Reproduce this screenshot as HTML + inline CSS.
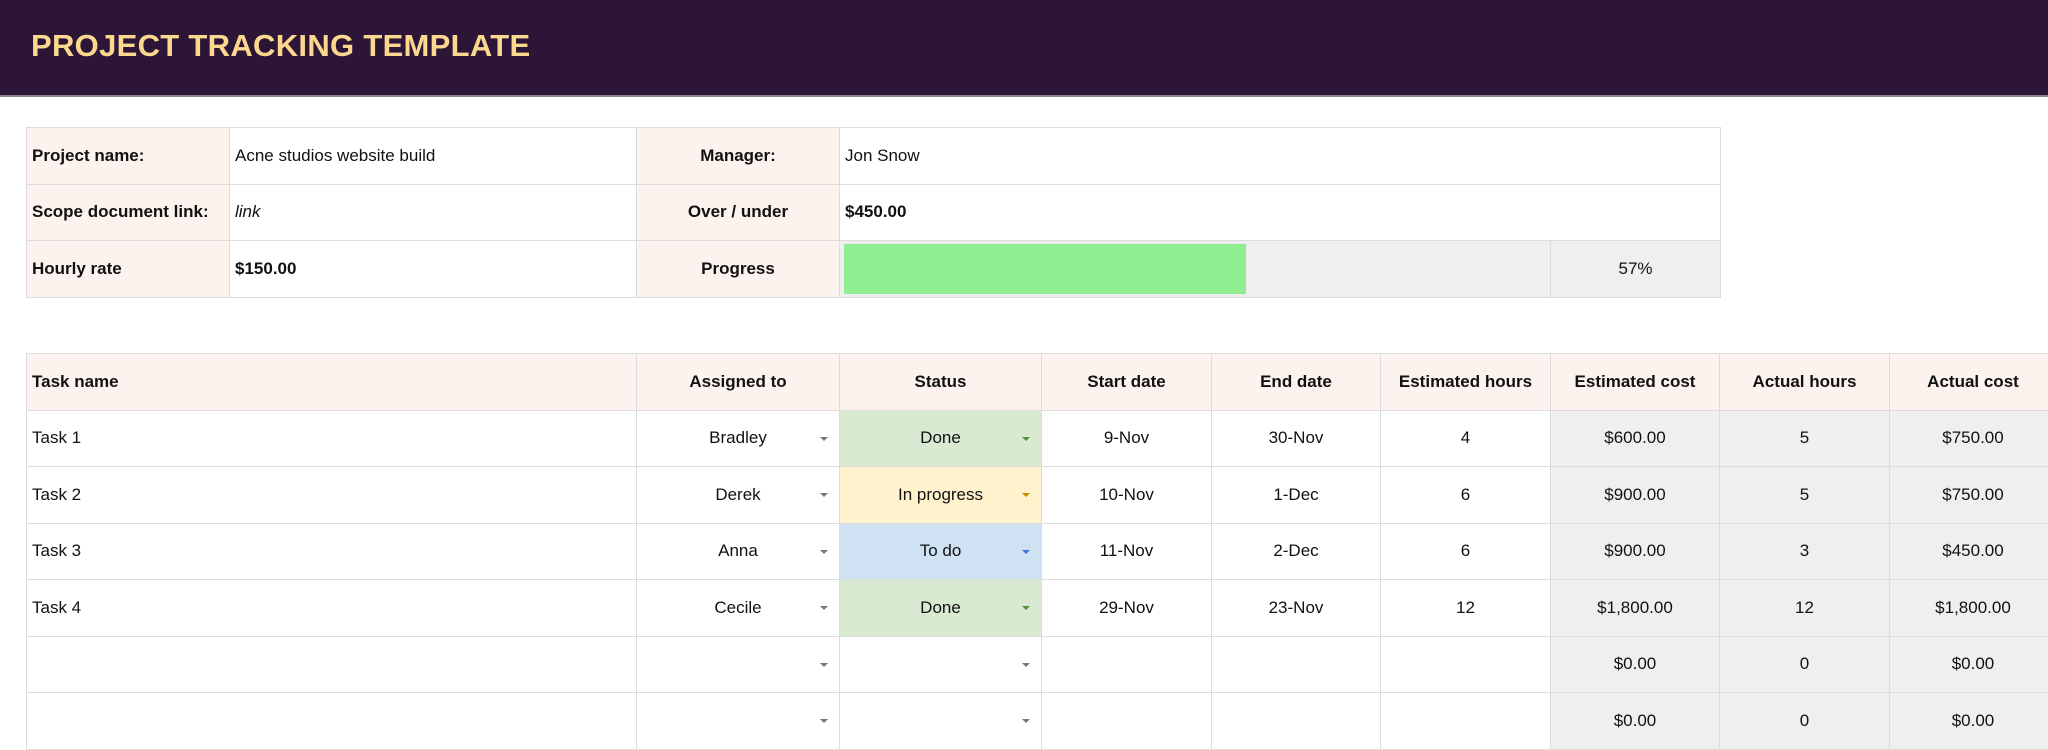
<!DOCTYPE html>
<html><head><meta charset="utf-8"><style>
*{margin:0;padding:0;box-sizing:border-box}
body{width:2048px;height:749px;overflow:hidden;background:#fff;font-family:"Liberation Sans",sans-serif;font-size:17px;color:#111;position:relative}
.hdr{position:absolute;left:0;top:0;width:2048px;height:97px;background:#2d1538;border-bottom:2px solid #8a8590}
.hdr h1{position:absolute;left:31px;top:28px;font-size:31px;font-weight:bold;color:#fcd88f;letter-spacing:0.3px}
table{position:absolute;border-collapse:collapse;table-layout:fixed}
td{border:1.5px solid #dcdcdc;height:56.5px;padding:0 5px;white-space:nowrap;overflow:hidden;position:relative}
.l{background:#fcf3ee;font-weight:bold}
.c{text-align:center}
.b{font-weight:bold}
.g{background:#efefef}
.dn{background:#d9ead3}.ip{background:#fff2cc}.td{background:#cfe2f3}
.ar::after{content:"";position:absolute;right:11px;top:26px;border-left:4px solid transparent;border-right:4px solid transparent;border-top:4px solid #777}
.ar.ag::after{border-top-color:#5a8f3c}.ar.ao::after{border-top-color:#c98a00}.ar.ab::after{border-top-color:#3c78d8}
</style></head><body>
<div class="hdr"><h1>PROJECT TRACKING TEMPLATE</h1></div>
<table style="left:26px;top:127px;width:1694px">
<colgroup><col style="width:203px"><col style="width:407px"><col style="width:203px"><col style="width:711px"><col style="width:170px"></colgroup>
<tr><td class="l">Project name:</td><td>Acne studios website build</td><td class="l c">Manager:</td><td colspan="2">Jon Snow</td></tr>
<tr><td class="l">Scope document link:</td><td><i>link</i></td><td class="l c">Over / under</td><td colspan="2" class="b">$450.00</td></tr>
<tr><td class="l">Hourly rate</td><td class="b">$150.00</td><td class="l c">Progress</td><td class="g" style="padding:3px 4px"><div style="width:402px;height:50px;background:#90ee90"></div></td><td class="g c">57%</td></tr>
</table>
<table style="left:26px;top:353px;width:2030px">
<colgroup><col style="width:610px"><col style="width:203px"><col style="width:202px"><col style="width:170px"><col style="width:169px"><col style="width:170px"><col style="width:169px"><col style="width:170px"><col style="width:167px"></colgroup>
<tr class="l"><td class="l">Task name</td><td class="l c">Assigned to</td><td class="l c">Status</td><td class="l c">Start date</td><td class="l c">End date</td><td class="l c">Estimated hours</td><td class="l c">Estimated cost</td><td class="l c">Actual hours</td><td class="l c">Actual cost</td></tr>
<tr><td>Task 1</td><td class="c ar">Bradley</td><td class="c dn ar ag">Done</td><td class="c">9-Nov</td><td class="c">30-Nov</td><td class="c">4</td><td class="c g">$600.00</td><td class="c g">5</td><td class="c g">$750.00</td></tr>
<tr><td>Task 2</td><td class="c ar">Derek</td><td class="c ip ar ao">In progress</td><td class="c">10-Nov</td><td class="c">1-Dec</td><td class="c">6</td><td class="c g">$900.00</td><td class="c g">5</td><td class="c g">$750.00</td></tr>
<tr><td>Task 3</td><td class="c ar">Anna</td><td class="c td ar ab">To do</td><td class="c">11-Nov</td><td class="c">2-Dec</td><td class="c">6</td><td class="c g">$900.00</td><td class="c g">3</td><td class="c g">$450.00</td></tr>
<tr><td>Task 4</td><td class="c ar">Cecile</td><td class="c dn ar ag">Done</td><td class="c">29-Nov</td><td class="c">23-Nov</td><td class="c">12</td><td class="c g">$1,800.00</td><td class="c g">12</td><td class="c g">$1,800.00</td></tr>
<tr><td></td><td class="ar"></td><td class="ar"></td><td></td><td></td><td></td><td class="c g">$0.00</td><td class="c g">0</td><td class="c g">$0.00</td></tr>
<tr><td></td><td class="ar"></td><td class="ar"></td><td></td><td></td><td></td><td class="c g">$0.00</td><td class="c g">0</td><td class="c g">$0.00</td></tr>
</table>
</body></html>
